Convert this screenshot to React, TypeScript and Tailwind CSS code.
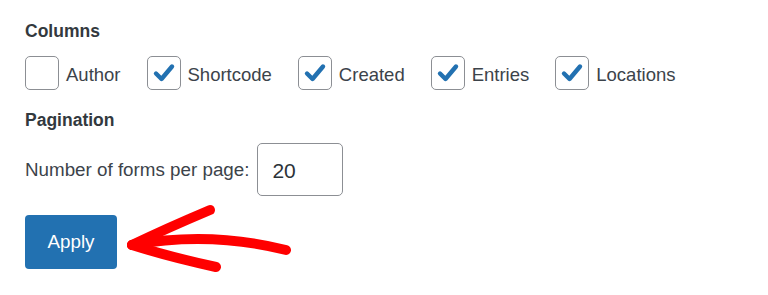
import React from "react";

const font = { fontFamily: '"Liberation Sans", Arial, Helvetica, sans-serif' };

function Box({ checked }: { checked: boolean }) {
  return (
    <span className="flex h-[34px] w-[34px] shrink-0 items-center justify-center rounded-[5px] border-[1.5px] border-[#8c8f94] bg-white">
      {checked && (
        <svg width="26" height="26" viewBox="0 0 26 26">
          <path
            d="M5 13.5 L10.5 19 L21 6.5"
            fill="none"
            stroke="#2271b1"
            strokeWidth="4.4"
            strokeLinecap="round"
            strokeLinejoin="round"
          />
        </svg>
      )}
    </span>
  );
}

function Item({ label, checked, last }: { label: string; checked: boolean; last?: boolean }) {
  return (
    <label className={`flex items-start gap-[7px] ${last ? "" : "mr-[26px]"}`}>
      <Box checked={checked} />
      <span className="pt-[2px] text-[18.5px] leading-[34px] text-[#3c434a]">{label}</span>
    </label>
  );
}

export default function App() {
  return (
    <div className="relative h-[295px] w-[768px] overflow-hidden bg-white" style={font}>
      <div className="flex flex-col pl-[25px] pt-[21px]">
        <div className="h-[20px] text-[17.5px] font-bold leading-[20px] text-[#33393e]">Columns</div>
        <div className="mt-[15px] flex">
          <Item label="Author" checked={false} />
          <Item label="Shortcode" checked />
          <Item label="Created" checked />
          <Item label="Entries" checked />
          <Item label="Locations" checked last />
        </div>
        <div className="mt-[18px] h-[20px] text-[17.5px] font-bold leading-[20px] text-[#33393e]">Pagination</div>
        <div className="mt-[13px] flex items-center gap-[8px]">
          <span className="pt-[1px] text-[18.8px] text-[#3c434a]">Number of forms per page:</span>
          <div className="flex h-[53px] w-[86px] items-center rounded-[5px] border-[1.5px] border-[#8c8f94] bg-white pl-[14px] pt-[2px] text-[21px] text-[#2c3338]">
            20
          </div>
        </div>
        <button className="mt-[19px] flex h-[54px] w-[92px] items-center justify-center rounded-[4px] bg-[#2271b1] text-[18.8px] text-white">
          Apply
        </button>
      </div>
      <svg
        className="pointer-events-none absolute left-0 top-0"
        width="768"
        height="295"
        viewBox="0 0 768 295"
      >
        <g fill="none" stroke="#ff0000" strokeWidth="10" strokeLinecap="round" strokeLinejoin="round">
          <path d="M132 245 Q 165 229 210 210" />
          <path d="M132 245 Q 210 231 286 250" />
          <path d="M132 245 Q 170 257 216 267" />
        </g>
      </svg>
    </div>
  );
}
